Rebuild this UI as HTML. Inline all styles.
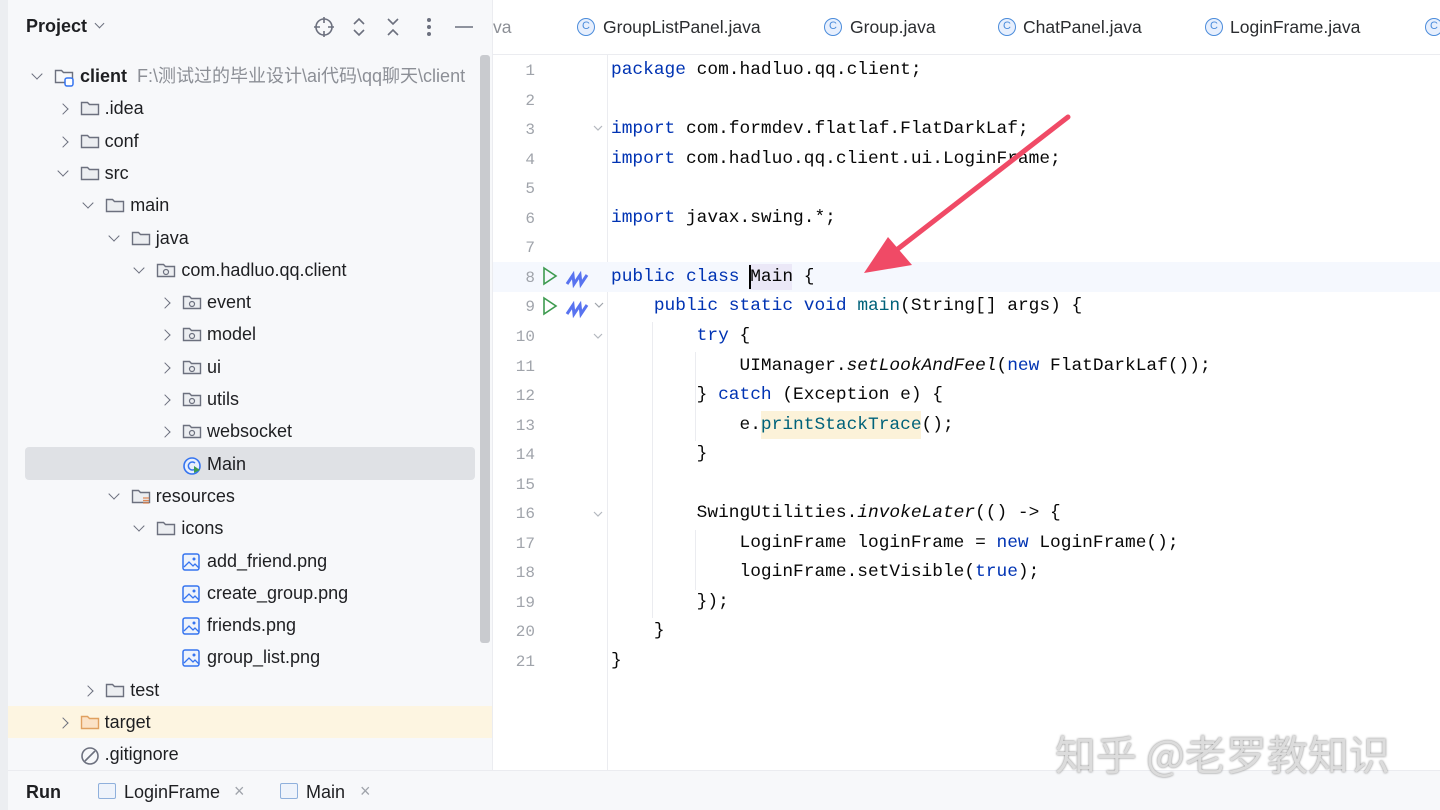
<!DOCTYPE html>
<html><head><meta charset="utf-8"><style>
*{margin:0;padding:0;box-sizing:border-box}
body{width:1440px;height:810px;overflow:hidden;background:#fff;font-family:"Liberation Sans","Noto Sans CJK SC",sans-serif;position:relative;color:#1e1f22}
.a{position:absolute;white-space:nowrap}
.tr{position:absolute;font-size:18px;line-height:20px;white-space:nowrap}
.ch{position:absolute;width:8px;height:8px;border-right:1.6px solid #6c707e;border-bottom:1.6px solid #6c707e}
.r{transform:rotate(-45deg)}
.d{transform:rotate(45deg)}
.code{position:absolute;left:611px;font-family:"Liberation Mono",monospace;font-size:17.85px;line-height:20px;white-space:pre;color:#080808}
.ln{position:absolute;width:48px;left:487px;text-align:right;font-family:"Liberation Mono",monospace;font-size:16px;color:#a0a4ab;line-height:20px}
.k{color:#0033b3}.m{color:#00627a}.i{font-style:italic}
.tab{position:absolute;top:17px;font-size:17.5px;color:#2b2d30;white-space:nowrap}
.ci{position:absolute;top:18px;width:18px;height:18px;border:1.6px solid #4b8cdb;border-radius:50%;font-size:11px;color:#4b8cdb;text-align:center;line-height:15px;background:#e7effd}
</style></head><body>
<div class="a" style="left:0;top:0;width:8px;height:810px;background:#eceef1"></div>
<div class="a" style="left:8px;top:0;width:484px;height:770px;background:#f7f8fa"></div>
<div class="a" style="left:492px;top:0;width:1px;height:770px;background:#ebecf0"></div>
<div class="a" style="left:26px;top:16px;font-size:18px;font-weight:bold">Project</div>
<div class="ch d" style="left:96px;top:20px;width:7px;height:7px;border-width:1.3px"></div>
<svg class="a" style="left:312px;top:15px" width="170" height="24" fill="none" stroke="#6c707e" stroke-width="1.6">
<circle cx="12" cy="12" r="8"/><path d="M12 2v6M12 16v6M2 12h6M16 12h6"/>
<path d="M42 9l5-5 5 5M42 15l5 5 5-5"/>
<path d="M76 4l5 5 5-5M76 20l5-5 5 5"/>
<circle cx="117" cy="5" r="1.2" fill="#6c707e"/><circle cx="117" cy="12" r="1.2" fill="#6c707e"/><circle cx="117" cy="19" r="1.2" fill="#6c707e"/>
<path d="M143 12h18"/></svg>
<div class="a" style="left:480px;top:55px;width:10px;height:588px;background:#c9cbcf;border-radius:3px"></div>
<div class="a" style="left:25px;top:447px;width:450px;height:33px;background:#dfe1e5;border-radius:4px"></div>
<div class="a" style="left:8px;top:706px;width:484px;height:32px;background:#fdf5e1"></div>

<div id="tree"></div>
<div class="a" style="left:493px;top:54px;width:947px;height:1px;background:#ebecf0"></div>
<div class="a" style="left:607px;top:55px;width:1px;height:715px;background:#ebecf0"></div>
<div class="a" style="left:493px;top:262px;width:947px;height:30px;background:#f5f8fe"></div>
<div class="a" style="left:749px;top:264px;width:43px;height:26px;background:#ebe8f7"></div>
<div class="a" style="left:749px;top:265px;width:2px;height:24px;background:#000"></div>
<div class="a" style="left:761px;top:411px;width:160px;height:28px;background:#fcf2d9"></div>
<div class="a" style="left:652px;top:322px;width:1px;height:296px;background:#ebecf0"></div>
<div class="a" style="left:695px;top:352px;width:1px;height:60px;background:#ebecf0"></div>
<div class="a" style="left:695px;top:411px;width:1px;height:30px;background:#ebecf0"></div>
<div class="a" style="left:695px;top:530px;width:1px;height:60px;background:#ebecf0"></div>
<div id="code"></div>
<svg class="a" style="left:540px;top:264px" width="75" height="55" fill="none">
<path d="M4 4l12 8-12 8z" stroke="#3e9b50" stroke-width="1.6"/>
<path d="M4 34l12 8-12 8z" stroke="#3e9b50" stroke-width="1.6"/>
<path d="M27 20l6-9 1 9 6-9 1 9 6-9M27 50l6-9 1 9 6-9 1 9 6-9" stroke="#5873f0" stroke-width="3"/>
<path d="M55 39l4 4 4-4" stroke="#a0a4ab" stroke-width="1.2"/>
</svg>
<svg class="a" style="left:590px;top:120px" width="20" height="420" fill="none" stroke="#b4b8bf" stroke-width="1.2">
<path d="M4 6l4 4 4-4M4 214l4 4 4-4M4 392l4 4 4-4"/></svg>
<div class="tab" style="left:493px;color:#8c8f96">va</div>
<div class="ci" style="left:577px">C</div><div class="tab" style="left:603px">GroupListPanel.java</div>
<div class="ci" style="left:824px">C</div><div class="tab" style="left:850px">Group.java</div>
<div class="ci" style="left:998px">C</div><div class="tab" style="left:1023px">ChatPanel.java</div>
<div class="ci" style="left:1205px">C</div><div class="tab" style="left:1230px">LoginFrame.java</div>
<div class="ci" style="left:1425px">C</div>
<svg class="a" style="left:850px;top:105px" width="230" height="180"><path d="M218 12L40 150" stroke="#f04a66" stroke-width="5" stroke-linecap="round"/><path d="M14 168L62 160 38 132z" fill="#f04a66"/></svg>
<div class="a" style="left:8px;top:770px;width:1432px;height:1px;background:#ebecf0"></div>
<div class="a" style="left:8px;top:771px;width:1432px;height:39px;background:#f7f8fa"></div>
<div class="a" style="left:26px;top:782px;font-size:18px;font-weight:bold">Run</div>
<div class="a" style="left:98px;top:783px;width:18px;height:16px;border:1.5px solid #8fb0dc;border-radius:2px;background:#eef3fb"></div>
<div class="a" style="left:124px;top:782px;font-size:18px">LoginFrame</div>
<div class="a" style="left:234px;top:781px;font-size:18px;color:#a0a4ab">×</div>
<div class="a" style="left:280px;top:783px;width:18px;height:16px;border:1.5px solid #8fb0dc;border-radius:2px;background:#eef3fb"></div>
<div class="a" style="left:306px;top:782px;font-size:18px">Main</div>
<div class="a" style="left:360px;top:781px;font-size:18px;color:#a0a4ab">×</div>
<div class="a" style="left:1055px;top:730px;font-size:41px;line-height:44px;color:#dcdcdc;font-family:'Noto Sans CJK SC',sans-serif;text-shadow:0 0 2px #777">知乎 @老罗教知识</div>
<script>
var F='<svg width="20" height="17" fill="none"><path d="M1.5 2.5h6l2 2h9v10h-17z" stroke="#6c707e" stroke-width="1.4" fill="#eceef1"/>';
var folder=F+'</svg>';
var pkg=F+'<circle cx="10" cy="10" r="2.5" stroke="#6c707e" stroke-width="1.2"/></svg>';
var res=F+'<path d="M12 10h6M12 12.5h6M12 15h6" stroke="#e08855" stroke-width="1.3"/></svg>';
var tgt='<svg width="20" height="17" fill="none"><path d="M1.5 2.5h6l2 2h9v10h-17z" stroke="#e0a060" stroke-width="1.4" fill="#fbe2c6"/></svg>';
var mod='<svg width="22" height="20" fill="none"><path d="M1.5 2.5h6l2 2h9v10h-17z" stroke="#6c707e" stroke-width="1.4"/><rect x="11" y="10" width="8" height="8" rx="2" stroke="#3574f0" stroke-width="1.5" fill="#fff"/></svg>';
var img='<svg width="18" height="18" fill="none"><rect x="1" y="1" width="16" height="16" rx="2" stroke="#3574f0" stroke-width="1.5" fill="#eef3fb"/><path d="M2 14l5-5 4 4 2-2 4 4" stroke="#3574f0" stroke-width="1.3"/><circle cx="12" cy="6" r="1.5" fill="#3574f0"/></svg>';
var main='<svg width="20" height="20" fill="none"><circle cx="10" cy="10" r="8" stroke="#3574f0" stroke-width="1.6" fill="#e7effd"/><path d="M13 7a4 4 0 1 0 0 6" stroke="#3574f0" stroke-width="1.5"/><path d="M12 10l6 4-6 3z" fill="#3e9b50"/></svg>';
var ign='<svg width="20" height="20" fill="none"><circle cx="10" cy="10" r="8" stroke="#6c707e" stroke-width="1.6"/><path d="M5 15L15 5" stroke="#6c707e" stroke-width="1.6"/></svg>';
var rows=[[0,'o',mod,'<b>client</b>&nbsp; <span style="color:#8c8f96">F:\\测试过的毕业设计\\ai代码\\qq聊天\\client</span>'],
[1,'c',folder,'.idea'],[1,'c',folder,'conf'],[1,'o',folder,'src'],[2,'o',folder,'main'],[3,'o',folder,'java'],[4,'o',pkg,'com.hadluo.qq.client'],
[5,'c',pkg,'event'],[5,'c',pkg,'model'],[5,'c',pkg,'ui'],[5,'c',pkg,'utils'],[5,'c',pkg,'websocket'],[5,'',main,'Main'],
[3,'o',res,'resources'],[4,'o',folder,'icons'],[5,'',img,'add_friend.png'],[5,'',img,'create_group.png'],[5,'',img,'friends.png'],[5,'',img,'group_list.png'],
[2,'c',folder,'test'],[1,'c',tgt,'target'],[1,'',ign,'.gitignore']];
var h='';rows.forEach(function(r,i){var y=77+i*32.3;var x=36+r[0]*25.6;
if(r[1]=='c')h+='<div class="ch r" style="left:'+(x-3)+'px;top:'+(y-4)+'px"></div>';
if(r[1]=='o')h+='<div class="ch d" style="left:'+(x-3)+'px;top:'+(y-7)+'px"></div>';
h+='<div class="a" style="left:'+(x+18)+'px;top:'+(y-9)+'px">'+r[2]+'</div>';
h+='<div class="tr" style="left:'+(x+(r[0]==0?44:43))+'px;top:'+(y-11)+'px">'+r[3]+'</div>';});
document.getElementById('tree').innerHTML=h;
var c=['<span class="k">package</span> com.hadluo.qq.client;','',
'<span class="k">import</span> com.formdev.flatlaf.FlatDarkLaf;','<span class="k">import</span> com.hadluo.qq.client.ui.LoginFrame;','',
'<span class="k">import</span> javax.swing.*;','',
'<span class="k">public class</span> Main {',
'    <span class="k">public static void</span> <span class="m">main</span>(String[] args) {',
'        <span class="k">try</span> {',
'            UIManager.<span class="i">setLookAndFeel</span>(<span class="k">new</span> FlatDarkLaf());',
'        } <span class="k">catch</span> (Exception e) {',
'            e.<span class="m">printStackTrace</span>();','        }','',
'        SwingUtilities.<span class="i">invokeLater</span>(() -> {',
'            LoginFrame loginFrame = <span class="k">new</span> LoginFrame();',
'            loginFrame.setVisible(<span class="k">true</span>);','        });','    }','}'];
var s='';c.forEach(function(l,i){var y=60+i*29.55;s+='<div class="ln" style="top:'+(y+1)+'px">'+(i+1)+'</div><div class="code" style="top:'+y+'px">'+l+'</div>';});
document.getElementById('code').innerHTML=s;
</script>
</body></html>
